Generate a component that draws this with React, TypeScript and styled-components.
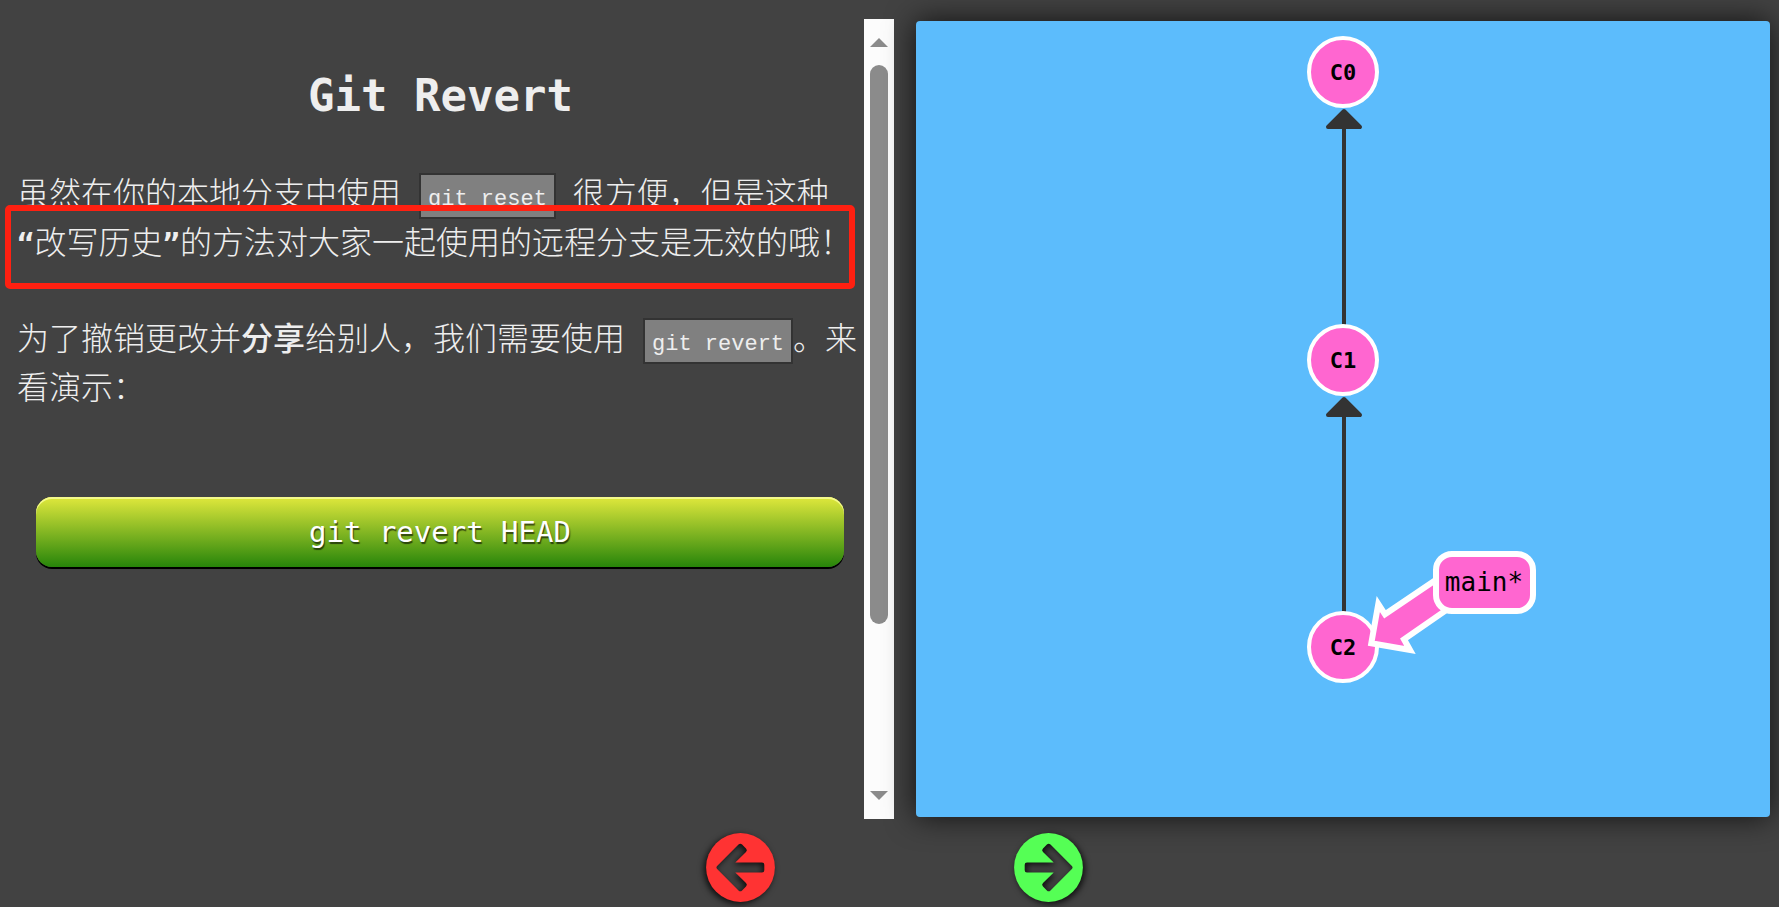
import React, { useId } from "react";
import styled, { createGlobalStyle } from "styled-components";

const mono = `"DejaVu Sans Mono", "Liberation Mono", "Noto Sans CJK SC", monospace`;

const GlobalStyle = createGlobalStyle`
  *, *::before, *::after { box-sizing: border-box; }
  body {
    margin: 0;
    background: #424242;
    color: #eee;
    font-family: ${mono};
  }
`;

const Page = styled.div`
  display: flex;
  flex-direction: column;
  min-height: 100vh;
`;

const Panels = styled.main`
  flex: 1;
  display: grid;
  grid-template-columns: 894fr 885fr;
  padding-top: 19px;
`;

const Lesson = styled.section`
  display: flex;
  min-width: 0;
`;

const LessonBody = styled.div`
  flex: 1;
  min-width: 0;
  padding: 53px 0 0 17px;
`;

const Title = styled.h1`
  margin: 0 0 47px;
  font-size: 44px;
  line-height: 48px;
  text-align: center;
`;

const Paragraph = styled.p`
  position: relative;
  margin: 0 0 47px;
  font-family: "Noto Sans CJK SC", sans-serif;
  font-size: 32px;
  font-weight: 300;
  line-height: 49px;

  strong { font-weight: 500; }
`;

const Quote = styled.span`
  font: bold 29px/1 "DejaVu Sans Mono", monospace;
`;

const Code = styled.code<{ $spaceAfter?: boolean }>`
  margin: 0 ${(p) => (p.$spaceAfter ? "17px" : "0")} 0 18px;
  padding: 12px 7px 5px;
  border: 2px solid #333;
  background: #808080;
  font: 22px/1 "Liberation Mono", monospace;
`;

const Highlight = styled.span`
  position: absolute;
  top: 38px;
  left: -12px;
  right: 9px;
  height: 84px;
  border: 6px solid #ff2011;
  border-radius: 5px;
  pointer-events: none;
`;

const CommandButton = styled.button`
  display: block;
  width: calc(100% - 39px);
  height: 70px;
  margin: 87px 20px 0 19px;
  padding: 0;
  border: 0;
  border-radius: 16px;
  background: linear-gradient(#e0e83c, #27850a);
  box-shadow: inset 0 2px 0 #f4f98c, 0 2px 0 #000;
  color: #fff;
  font-family: ${mono};
  font-size: 29px;
  text-shadow: 1px 2px 1px rgba(0, 0, 0, 0.6);
`;

const ScrollTrack = styled.div`
  display: flex;
  flex-direction: column;
  align-items: center;
  width: 30px;
  padding: 19px 0;
  background: #fcfcfc;
`;

const ScrollArrow = styled.svg`
  width: 18px;
  height: 9px;
  fill: #8b8b8b;
`;

const ScrollRail = styled.div`
  flex: 1;
  width: 18px;
  padding-top: 18px;
`;

const ScrollThumb = styled.div`
  height: 77%;
  border-radius: 9px;
  background: #8b8b8b;
`;

const Canvas = styled.section`
  position: relative;
  margin: 2px 9px 2px 22px;
  border-radius: 4px;
  background: #5cbcfc;
  box-shadow: 0 0 30px rgba(0, 0, 0, 0.75);
`;

const Tree = styled.svg`
  position: absolute;
  inset: 0;
  width: 100%;
  height: 100%;
  font-family: ${mono};
`;

const Footer = styled.footer`
  display: flex;
  justify-content: center;
  gap: 239px;
  height: 88px;
  padding: 14px 0 0 10px;
`;

const RoundButton = styled.button<{ $color: string; $side: number }>`
  width: 69px;
  height: 69px;
  padding: 0;
  border: 0;
  background: none;
  color: ${(p) => p.$color};
  filter: drop-shadow(${(p) => p.$side * 2}px 2px 3px rgba(0, 0, 0, 0.8));

  svg { display: block; }
`;

function ArrowCircle({ flip = false }: { flip?: boolean }) {
  const id = useId();
  return (
    <svg width="69" height="69" viewBox="0 0 69 69" aria-hidden="true">
      <mask id={id}>
        <rect width="69" height="69" fill="#fff" />
        <path
          fill="#000"
          transform="translate(0 .2)"
          d="M10.9 33L32.5 11.4Q34.3 9.6 36.1 11.4L40 15.3Q41.8 17.1 40 18.9L29.3 29.2H56Q58.3 29.2 58.3 31.5V37Q58.3 39.3 56 39.3H29.3L40 49.7Q41.8 51.5 40 53.3L36.1 57.2Q34.3 59 32.5 57.2L10.9 35.6Q9.9 34.3 10.9 33Z"
        />
      </mask>
      <g transform={flip ? "translate(69 0) scale(-1 1)" : undefined}>
        <circle cx="34.5" cy="34.5" r="34.4" fill="currentColor" mask={`url(#${id})`} />
      </g>
    </svg>
  );
}

const commits = [
  { id: "C0", y: 51 },
  { id: "C1", y: 339 },
  { id: "C2", y: 626 },
];

function CommitTree() {
  return (
    <Tree viewBox="0 0 854 796" role="img" aria-label="C0, C1, C2, main*">
      {commits.slice(0, -1).map((c, i) => (
        <g key={c.id} fill="#333" stroke="#333">
          <path d={`M428 ${c.y + 50}V${commits[i + 1].y - 30}`} strokeWidth="4" />
          <path
            d={`M428 ${c.y + 39}L444 ${c.y + 55}H412Z`}
            strokeWidth="4"
            strokeLinejoin="round"
          />
        </g>
      ))}
      {commits.map((c) => (
        <g key={c.id}>
          <circle cx="427" cy={c.y} r="34" fill="#ff66d0" stroke="#fff" strokeWidth="4" />
          <text x="427" y={c.y + 8} textAnchor="middle" fontSize="22" fontWeight="700">
            {c.id}
          </text>
        </g>
      ))}
      <path
        d="M455.3 622.3L462.3 583L469 593.3L530 552L529 590L488 618.3L494 629Z"
        fill="#ff66d0"
        stroke="#fff"
        strokeWidth="6"
      />
      <rect x="520" y="533" width="97" height="57" rx="16" fill="#ff66d0" stroke="#fff" strokeWidth="6" />
      <text x="568" y="570" textAnchor="middle" fontSize="26">
        main*
      </text>
    </Tree>
  );
}

export default function App() {
  return (
    <Page>
      <GlobalStyle />
      <Panels>
        <Lesson>
          <LessonBody>
            <Title>Git Revert</Title>
            <Paragraph>
              虽然在你的本地分支中使用<Code $spaceAfter>git reset</Code>很方便，但是这种
              <wbr />
              <Quote>“</Quote>改写历史<Quote>”</Quote>的方法对大家一起使用的远程分支是无效的哦！
              <Highlight />
            </Paragraph>
            <Paragraph>
              为了撤销更改并<strong>分享</strong>给别人，我们需要使用<Code>git revert</Code>。来看演示：
            </Paragraph>
            <CommandButton type="button">git revert HEAD</CommandButton>
          </LessonBody>
          <ScrollTrack aria-hidden="true">
            <ScrollArrow viewBox="0 0 18 9"><path d="M0 9L9 0L18 9Z" /></ScrollArrow>
            <ScrollRail><ScrollThumb /></ScrollRail>
            <ScrollArrow viewBox="0 0 18 9"><path d="M0 0H18L9 9Z" /></ScrollArrow>
          </ScrollTrack>
        </Lesson>
        <Canvas>
          <CommitTree />
        </Canvas>
      </Panels>
      <Footer>
        <RoundButton type="button" aria-label="Previous" $color="#ff3333" $side={-1}>
          <ArrowCircle />
        </RoundButton>
        <RoundButton type="button" aria-label="Next" $color="#55ff55" $side={1}>
          <ArrowCircle flip />
        </RoundButton>
      </Footer>
    </Page>
  );
}
